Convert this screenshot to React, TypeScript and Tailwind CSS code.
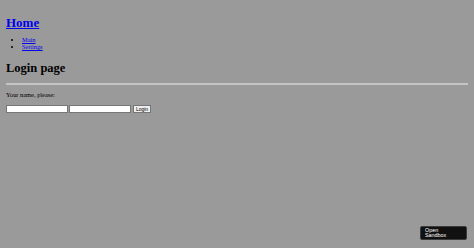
// Scaled-down "Login page" demo: tiny serif document on a grey canvas,
// with the little "Open Sandbox" pill pinned in the bottom-right corner.

export default function App() {
  return (
    <div className="relative min-h-screen bg-[#9a9a9a] px-[6px] pt-[16px] text-black [font-family:'Liberation_Serif','Times_New_Roman',serif]">
      <h2 className="text-[13px] leading-[13px] font-bold">
        <a href="#" className="text-[#0000ee] underline">
          Home
        </a>
      </h2>

      <ul className="mt-[7px] list-disc pl-[16px] text-[6.4px] leading-[7px]">
        <li>
          <a href="#" className="text-[#0000ee] underline">
            Main
          </a>
        </li>
        <li>
          <a href="#" className="text-[#0000ee] underline">
            Settings
          </a>
        </li>
      </ul>

      <h1 className="mt-[12px] text-[12.5px] leading-[12.5px] font-bold">Login page</h1>

      <hr className="mt-[8px] h-[2px] border-0 bg-[#c4c4c4]" />

      <p className="mt-[6px] text-[6.4px] leading-[7px]">Your name, please:</p>

      <form className="mt-[7px] flex items-start" onSubmit={(e) => e.preventDefault()}>
        <input className="h-[8px] w-[62px] border border-[#767676] bg-white" />
        <input className="ml-[1px] h-[8px] w-[62px] border border-[#767676] bg-white" />
        <button
          type="submit"
          className="ml-[2px] h-[8px] w-[18px] border border-[#767676] bg-[#efefef] text-[5px] leading-[6px] [font-family:'Liberation_Sans',Arial,sans-serif]"
        >
          Login
        </button>
      </form>

      <a
        href="#"
        className="absolute right-[7px] bottom-[8px] flex h-[14px] w-[47px] flex-col justify-center rounded-[2px] border border-[#3a3a3a] bg-[#111111] px-[4px] text-[5.4px] leading-[5.4px] text-white [font-family:'Liberation_Sans',Arial,sans-serif]"
      >
        <span>Open</span>
        <span>Sandbox</span>
      </a>
    </div>
  );
}
